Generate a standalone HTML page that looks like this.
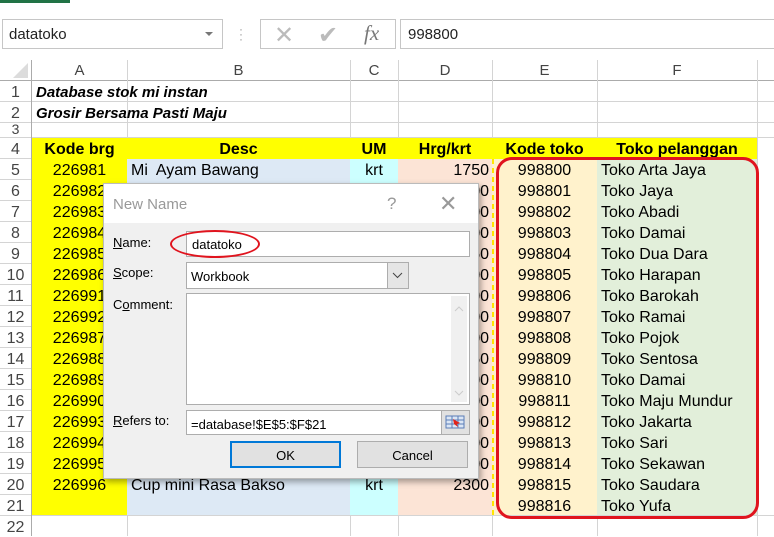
<!DOCTYPE html>
<html><head><meta charset="utf-8"><style>
*{margin:0;padding:0;box-sizing:border-box}
body{width:774px;height:536px;overflow:hidden;background:#fff;font-family:"Liberation Sans",sans-serif;position:relative}
.a{position:absolute}
.c{position:absolute;font-size:16px;line-height:24px;height:21px;white-space:nowrap;overflow:hidden;color:#000}
.hl{position:absolute;background:#d4d4d4}
.dl{font-family:"Liberation Sans",sans-serif;font-size:13px;color:#000}
u{text-decoration:underline}
</style></head><body>
<div class="a" style="left:0;top:0;width:70px;height:3px;background:#217346"></div>
<!-- formula bar -->
<div class="a" style="left:2px;top:19px;width:221px;height:30px;border:1px solid #c6c6c6;background:#fff"></div>
<div class="a dl" style="left:9px;top:26px;font-size:15px;color:#222">datatoko</div>
<div class="a" style="left:205px;top:32px;width:0;height:0;border-left:4px solid transparent;border-right:4px solid transparent;border-top:4px solid #777"></div>
<div class="a" style="left:239px;top:27px;color:#999;font-size:12px;line-height:5px">·<br>·<br>·</div>
<div class="a" style="left:260px;top:19px;width:136px;height:30px;border:1px solid #c6c6c6;background:#fff"></div>
<div class="a" style="left:274px;top:21px;font-size:24px;color:#bbb">✕</div>
<div class="a" style="left:318px;top:21px;font-size:24px;color:#bbb">✔</div>
<div class="a" style="left:364px;top:21px;font-family:'Liberation Serif',serif;font-style:italic;font-size:21px;color:#777">fx</div>
<div class="a" style="left:400px;top:19px;width:380px;height:30px;border:1px solid #c6c6c6;background:#fff"></div>
<div class="a dl" style="left:408px;top:26px;font-size:15px;color:#222">998800</div>
<!-- column header -->
<div class="a" style="left:0;top:60px;width:774px;height:21px;background:#fff"></div>
<div class="a" style="left:13px;top:63px;width:0;height:0;border-left:15px solid transparent;border-bottom:15px solid #dcdcdc"></div>
<div class="hl" style="left:0;top:80px;width:774px;height:1px;background:#ababab"></div>
<div class="hl" style="left:31px;top:60px;width:1px;height:476px;background:#ababab"></div>
<div class="c" style="left:32px;top:59px;width:95px;text-align:center;color:#444;font-size:15px">A</div>
<div class="c" style="left:127px;top:59px;width:223px;text-align:center;color:#444;font-size:15px">B</div>
<div class="c" style="left:350px;top:59px;width:48px;text-align:center;color:#444;font-size:15px">C</div>
<div class="c" style="left:398px;top:59px;width:94px;text-align:center;color:#444;font-size:15px">D</div>
<div class="c" style="left:492px;top:59px;width:105px;text-align:center;color:#444;font-size:15px">E</div>
<div class="c" style="left:597px;top:59px;width:160px;text-align:center;color:#444;font-size:15px">F</div>
<!-- fills -->
<div class="a" style="left:32px;top:138px;width:726px;height:21px;background:#ffff00"></div>
<div class="a" style="left:32px;top:159px;width:95px;height:357px;background:#ffff00"></div>
<div class="a" style="left:127px;top:159px;width:223px;height:357px;background:#dde9f5"></div>
<div class="a" style="left:350px;top:159px;width:48px;height:357px;background:#ccffff"></div>
<div class="a" style="left:398px;top:159px;width:94px;height:357px;background:#fce4d6"></div>
<div class="a" style="left:492px;top:159px;width:105px;height:357px;background:#fff2cc"></div>
<div class="a" style="left:597px;top:159px;width:161px;height:357px;background:#e2efda"></div>
<!-- grid lines -->
<div class="hl" style="left:127px;top:60px;width:1px;height:78px"></div>
<div class="hl" style="left:350px;top:60px;width:1px;height:78px"></div>
<div class="hl" style="left:398px;top:60px;width:1px;height:78px"></div>
<div class="hl" style="left:492px;top:60px;width:1px;height:78px"></div>
<div class="hl" style="left:597px;top:60px;width:1px;height:78px"></div>
<div class="hl" style="left:757px;top:60px;width:1px;height:476px"></div>
<div class="hl" style="left:127px;top:516px;width:1px;height:20px"></div>
<div class="hl" style="left:350px;top:516px;width:1px;height:20px"></div>
<div class="hl" style="left:398px;top:516px;width:1px;height:20px"></div>
<div class="hl" style="left:492px;top:516px;width:1px;height:20px"></div>
<div class="hl" style="left:597px;top:516px;width:1px;height:20px"></div>
<div class="hl" style="left:32px;top:101px;width:742px;height:1px"></div>
<div class="hl" style="left:32px;top:122px;width:742px;height:1px"></div>
<div class="hl" style="left:32px;top:137px;width:742px;height:1px"></div>
<div class="hl" style="left:32px;top:515px;width:742px;height:1px"></div>
<div class="a" style="left:492px;top:159px;width:2px;height:357px;background:repeating-linear-gradient(#ffe600 0 5px,transparent 5px 9px)"></div>
<!-- row headers -->
<div class="c" style="left:0;top:81px;width:31px;text-align:center;color:#444">1</div>
<div class="c" style="left:0;top:102px;width:31px;text-align:center;color:#444">2</div>
<div class="c" style="left:0;top:119px;width:31px;text-align:center;color:#444;font-size:14px;line-height:21px">3</div>
<div class="hl" style="left:0;top:101px;width:31px;height:1px"></div>
<div class="hl" style="left:0;top:122px;width:31px;height:1px"></div>
<div class="hl" style="left:0;top:137px;width:31px;height:1px"></div>
<div class="c" style="left:36px;top:81px;font-weight:bold;font-style:italic;font-size:15px">Database stok mi instan</div>
<div class="c" style="left:36px;top:102px;font-weight:bold;font-style:italic;font-size:15px">Grosir Bersama Pasti Maju</div>
<div class="c" style="left:0;top:138px;width:31px;text-align:center;color:#444">4</div>
<div class="c" style="left:32px;top:138px;width:95px;text-align:center;font-weight:bold">Kode brg</div>
<div class="c" style="left:127px;top:138px;width:223px;text-align:center;font-weight:bold">Desc</div>
<div class="c" style="left:350px;top:138px;width:48px;text-align:center;font-weight:bold">UM</div>
<div class="c" style="left:398px;top:138px;width:94px;text-align:center;font-weight:bold">Hrg/krt</div>
<div class="c" style="left:492px;top:138px;width:105px;text-align:center;font-weight:bold">Kode toko</div>
<div class="c" style="left:597px;top:138px;width:160px;text-align:center;font-weight:bold">Toko pelanggan</div>
<div id="rows"></div>
<script>
var A=[226981,226982,226983,226984,226985,226986,226991,226992,226987,226988,226989,226990,226993,226994,226995,226996,''];
var F=['Arta Jaya','Jaya','Abadi','Damai','Dua Dara','Harapan','Barokah','Ramai','Pojok','Sentosa','Damai','Maju Mundur','Jakarta','Sari','Sekawan','Saudara','Yufa'];
var D=[1750,1800,1800,1800,1850,1800,1800,1800,1800,1850,1800,1800,1800,1800,1800,2300,''];
var h='';
for(var i=0;i<18;i++){var t=159+i*21;
h+='<div class="hl" style="left:0;top:'+(t-1)+'px;width:31px;height:1px"></div><div class="c" style="left:0;top:'+t+'px;width:31px;text-align:center;color:#444">'+(i+5)+'</div>';
if(i<17){
h+='<div class="c" style="left:32px;top:'+t+'px;width:95px;text-align:center">'+A[i]+'</div>';
h+='<div class="c" style="left:398px;top:'+t+'px;width:91px;text-align:right">'+D[i]+'</div>';
h+='<div class="c" style="left:492px;top:'+t+'px;width:105px;text-align:center">'+(998800+i)+'</div>';
h+='<div class="c" style="left:601px;top:'+t+'px">Toko '+F[i]+'</div>';}
}
h+='<div class="c" style="left:131px;top:159px">Mi&nbsp; Ayam Bawang</div><div class="c" style="left:350px;top:159px;width:48px;text-align:center">krt</div>';
h+='<div class="c" style="left:131px;top:474px">Cup mini Rasa Bakso</div><div class="c" style="left:350px;top:474px;width:48px;text-align:center">krt</div>';
document.getElementById('rows').innerHTML=h;
</script>
<!-- red outline -->
<div class="a" style="left:496px;top:157px;width:263px;height:362px;border:3px solid #e0141e;border-radius:16px"></div>
<!-- dialog -->
<div class="a" style="left:103px;top:183px;width:376px;height:296px;background:#f0f0f0;border:1px solid #bbb;box-shadow:2px 3px 6px rgba(0,0,0,.35)">
 <div class="a" style="left:0;top:0;width:374px;height:39px;background:#fff"></div>
 <div class="a dl" style="left:9px;top:12px;font-size:15px;color:#999">New Name</div>
 <div class="a dl" style="left:283px;top:10px;font-size:17px;color:#999">?</div>
 <div class="a dl" style="left:335px;top:7px;font-size:22px;color:#999">✕</div>
 <div class="a dl" style="left:9px;top:51px"><u>N</u>ame:</div>
 <div class="a dl" style="left:9px;top:81px"><u>S</u>cope:</div>
 <div class="a dl" style="left:9px;top:113px">C<u>o</u>mment:</div>
 <div class="a dl" style="left:9px;top:229px"><u>R</u>efers to:</div>
 <div class="a" style="left:82px;top:47px;width:284px;height:26px;background:#fff;border:1px solid #adadad"></div>
 <div class="a dl" style="left:88px;top:53px">datatoko</div>
 <div class="a" style="left:82px;top:78px;width:223px;height:27px;background:#fff;border:1px solid #adadad"></div>
 <div class="a" style="left:283px;top:79px;width:21px;height:25px;background:#e5e5e5;border-left:1px solid #adadad"></div>
 <svg class="a" style="left:288px;top:88px" width="11" height="7"><path d="M1 1 L5.5 5.5 L10 1" fill="none" stroke="#444"/></svg>
 <div class="a dl" style="left:87px;top:85px">Workbook</div>
 <div class="a" style="left:82px;top:109px;width:284px;height:112px;background:#fff;border:1px solid #adadad"></div>
 <div class="a" style="left:347px;top:112px;width:16px;height:106px;background:#f0f0f0"></div>
 <svg class="a" style="left:350px;top:122px" width="10" height="6"><path d="M1 5 L5 1 L9 5" fill="none" stroke="#ccc"/></svg>
 <svg class="a" style="left:350px;top:206px" width="10" height="6"><path d="M1 1 L5 5 L9 1" fill="none" stroke="#ccc"/></svg>
 <div class="a" style="left:82px;top:226px;width:284px;height:25px;background:#fff;border:1px solid #adadad"></div>
 <div class="a" style="left:337px;top:227px;width:28px;height:23px;background:#e1e1e1;border-left:1px solid #adadad"></div>
 <svg class="a" style="left:341px;top:230px" width="20" height="16"><rect x="1" y="2" width="18" height="12" fill="#dbe6f5" stroke="#5b7db8"/><line x1="1" y1="6" x2="19" y2="6" stroke="#5b7db8"/><line x1="1" y1="10" x2="19" y2="10" stroke="#5b7db8"/><line x1="7" y1="2" x2="7" y2="14" stroke="#5b7db8"/><line x1="13" y1="2" x2="13" y2="14" stroke="#5b7db8"/><path d="M8 5 L15 9 L12 10 L13 13 L9 10 Z" fill="#e2231a"/></svg>
 <div class="a dl" style="left:87px;top:233px">=database!$E$5:$F$21</div>
 <div class="a" style="left:126px;top:257px;width:111px;height:27px;background:#e1e1e1;border:2px solid #0078d7"></div>
 <div class="a dl" style="left:126px;top:264px;width:111px;text-align:center">OK</div>
 <div class="a" style="left:253px;top:257px;width:111px;height:27px;background:#e1e1e1;border:1px solid #adadad"></div>
 <div class="a dl" style="left:253px;top:264px;width:111px;text-align:center">Cancel</div>
</div>
<div class="a" style="left:170px;top:230px;width:90px;height:28px;border:2.5px solid #e0141e;border-radius:50%"></div>
</body></html>
